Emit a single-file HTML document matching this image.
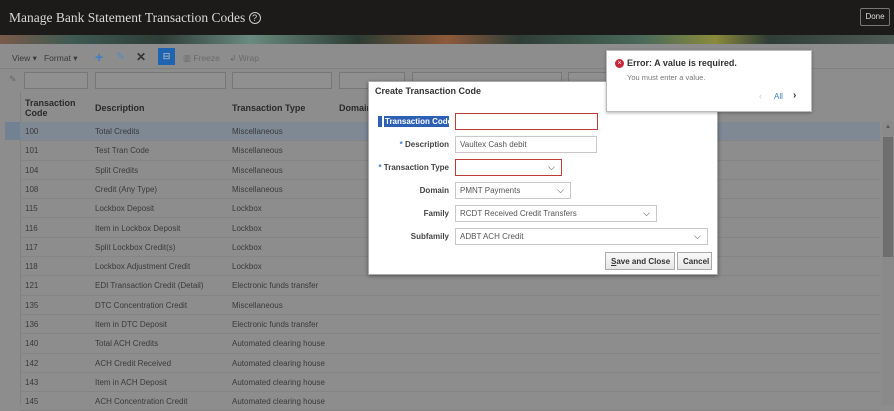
<!DOCTYPE html>
<html><head><style>
*{margin:0;padding:0;box-sizing:border-box}
body{width:894px;height:405px;overflow:hidden;background:#8d8d8d;font-family:"Liberation Sans",sans-serif;position:relative;color:#333;white-space:nowrap}
.a{position:absolute}
.hdr{left:0;top:0;width:894px;height:35px;background:#1d1b19}
.ttl{left:9px;top:10px;font-family:"Liberation Serif",serif;font-size:13.5px;color:#d8d8d8}
.ban{left:0;top:35px;width:894px;height:9px;background:linear-gradient(90deg,#7a5a4a,#3e5a52 8%,#2e3d38 18%,#6a8a80 28%,#2c3c34 40%,#8e5a3a 50%,#2e3d38 58%,#4a6a5a 72%,#8a8a3a 80%,#2e3d38 86%,#4e5a56)}
.tb{font-size:8.5px;color:#3a3a3a}
.f{background:#909090;border:1px solid #777;height:17px;top:72px}
.th{font-size:9px;font-weight:bold;color:#2a2a2a}
.r{left:20px;width:860px;height:19.3px;border-bottom:1px solid #848484;font-size:8px;color:#3a3a3a}
.r span{position:absolute;top:5px}
.dlg{left:368px;top:81px;width:350px;height:194px;background:#fff;border:1px solid #aaa;box-shadow:0 1px 4px rgba(0,0,0,.4)}
.lb{font-size:8px;font-weight:bold;color:#444;text-align:right;width:80px}
.in{border:1px solid #c8c8c8;height:17px;font-size:8px;color:#555;padding:3px 4px;background:#fff}
.in.err{border:1.5px solid #c03a3a}
.chev{position:absolute;right:6px;top:2px;font-size:9px;color:#333}
.btn{border:1px solid #aaa;background:linear-gradient(#fafafa,#e6e6e6);font-size:8px;font-weight:bold;height:18px;padding:4px 5px;color:#333}
</style></head><body>
<div class="a hdr"></div>
<div class="a ttl">Manage Bank Statement Transaction Codes <span style="font-family:'Liberation Sans';font-size:9px;border:1px solid #ccc;border-radius:50%;display:inline-block;width:12px;height:12px;text-align:center;line-height:11px;vertical-align:1px">?</span></div>
<div class="a" style="left:860px;top:8px;width:30px;height:18px;border:1px solid #777;border-radius:2px;color:#ddd;font-size:8px;text-align:center;line-height:16px">Done</div>
<div class="a ban"></div>
<div class="a tb" style="left:12px;top:53px">View ▾ &nbsp; Format ▾</div>
<div class="a" style="left:95px;top:49px;color:#3d7fc4;font-size:14px;font-weight:bold">+</div>
<div class="a" style="left:116px;top:50px;color:#5a88b8;font-size:11px">✎</div>
<div class="a" style="left:136px;top:50px;color:#333;font-size:12px;font-weight:bold">✕</div>
<div class="a" style="left:158px;top:48px;width:17px;height:17px;background:#1f64b0;color:#ccc;font-size:9px;text-align:center;line-height:17px">⊟</div>
<div class="a tb" style="left:183px;top:53px;color:#6a6a6a">▥ Freeze &nbsp;&nbsp; ↲ Wrap</div>
<div class="a" style="left:0;top:68px;width:894px;height:1px;background:#808080"></div>
<div class="a" style="left:9px;top:74px;font-size:9px;color:#666">✎</div>
<div class="a f" style="left:24px;width:64px"></div>
<div class="a f" style="left:95px;width:131px"></div>
<div class="a f" style="left:232px;width:100px"></div>
<div class="a f" style="left:339px;width:66px"></div>
<div class="a f" style="left:412px;width:150px"></div>
<div class="a f" style="left:568px;width:40px"></div>
<div class="a th" style="left:25px;top:98px;line-height:10px">Transaction<br>Code</div>
<div class="a th" style="left:95px;top:103px">Description</div>
<div class="a th" style="left:232px;top:103px">Transaction Type</div>
<div class="a th" style="left:339px;top:103px">Domain</div>
<div class="a" style="left:20px;top:92px;width:1px;height:313px;background:#808080"></div>
<div class="a" style="left:5px;top:122px;width:15px;height:18px;background:#738292"></div>
<div class="a" style="left:20px;top:122px;width:860px;height:19px;background:#7e8994"></div>
<div class="a" style="left:882px;top:122px;width:12px;height:283px;background:#8a8a8a"></div>
<div class="a" style="left:883px;top:137px;width:10px;height:120px;background:#6e6e6e"></div>
<div class="a" style="left:885px;top:124px;font-size:6px;color:#555">▲</div>

<div class="a" style="left:0;top:122px">
<div class="r a" style="top:0"><span style="left:5px">100</span><span style="left:75px">Total Credits</span><span style="left:212px">Miscellaneous</span></div>
<div class="r a" style="top:19.3px"><span style="left:5px">101</span><span style="left:75px">Test Tran Code</span><span style="left:212px">Miscellaneous</span></div>
<div class="r a" style="top:38.6px"><span style="left:5px">104</span><span style="left:75px">Split Credits</span><span style="left:212px">Miscellaneous</span></div>
<div class="r a" style="top:57.9px"><span style="left:5px">108</span><span style="left:75px">Credit (Any Type)</span><span style="left:212px">Miscellaneous</span></div>
<div class="r a" style="top:77.2px"><span style="left:5px">115</span><span style="left:75px">Lockbox Deposit</span><span style="left:212px">Lockbox</span></div>
<div class="r a" style="top:96.5px"><span style="left:5px">116</span><span style="left:75px">Item in Lockbox Deposit</span><span style="left:212px">Lockbox</span></div>
<div class="r a" style="top:115.8px"><span style="left:5px">117</span><span style="left:75px">Split Lockbox Credit(s)</span><span style="left:212px">Lockbox</span></div>
<div class="r a" style="top:135.1px"><span style="left:5px">118</span><span style="left:75px">Lockbox Adjustment Credit</span><span style="left:212px">Lockbox</span></div>
<div class="r a" style="top:154.4px"><span style="left:5px">121</span><span style="left:75px">EDI Transaction Credit (Detail)</span><span style="left:212px">Electronic funds transfer</span></div>
<div class="r a" style="top:173.7px"><span style="left:5px">135</span><span style="left:75px">DTC Concentration Credit</span><span style="left:212px">Miscellaneous</span></div>
<div class="r a" style="top:193px"><span style="left:5px">136</span><span style="left:75px">Item in DTC Deposit</span><span style="left:212px">Electronic funds transfer</span></div>
<div class="r a" style="top:212.3px"><span style="left:5px">140</span><span style="left:75px">Total ACH Credits</span><span style="left:212px">Automated clearing house</span></div>
<div class="r a" style="top:231.6px"><span style="left:5px">142</span><span style="left:75px">ACH Credit Received</span><span style="left:212px">Automated clearing house</span></div>
<div class="r a" style="top:250.9px"><span style="left:5px">143</span><span style="left:75px">Item in ACH Deposit</span><span style="left:212px">Automated clearing house</span></div>
<div class="r a" style="top:270.2px"><span style="left:5px">145</span><span style="left:75px">ACH Concentration Credit</span><span style="left:212px">Automated clearing house</span></div>
</div>

<div class="a dlg">
<div class="a" style="left:6px;top:4px;font-size:9px;font-weight:bold;color:#333">Create Transaction Code</div>
<div class="a" style="left:9px;top:34px;width:4px;height:11px;background:#2d5fb5"></div>
<div class="a" style="left:15px;top:34px;width:65px;height:11px;background:#2d5fb5;color:#fff;font-size:8px;font-weight:bold;line-height:11px;padding-left:1px;overflow:hidden">Transaction Code</div>
<div class="a in err" style="left:86px;top:31px;width:143px"></div>
<div class="a lb" style="left:0;top:58px"><span style="color:#3d7fc4">* </span>Description</div>
<div class="a in" style="left:86px;top:54px;width:142px">Vaultex Cash debit</div>
<div class="a lb" style="left:0;top:81px"><span style="color:#3d7fc4">* </span>Transaction Type</div>
<div class="a in err" style="left:86px;top:77px;width:107px"><span class="chev">⌵</span></div>
<div class="a lb" style="left:0;top:104px">Domain</div>
<div class="a in" style="left:86px;top:100px;width:116px">PMNT Payments<span class="chev">⌵</span></div>
<div class="a lb" style="left:0;top:127px">Family</div>
<div class="a in" style="left:86px;top:123px;width:202px">RCDT Received Credit Transfers<span class="chev">⌵</span></div>
<div class="a lb" style="left:0;top:150px">Subfamily</div>
<div class="a in" style="left:86px;top:146px;width:253px">ADBT ACH Credit<span class="chev">⌵</span></div>
<div class="a btn" style="left:236px;top:170px;width:70px"><u>S</u>ave and Close</div>
<div class="a btn" style="left:308px;top:170px;width:35px">Cancel</div>
</div>

<div class="a" style="left:606px;top:50px;width:206px;height:62px;background:#fff;border:1px solid #bbb;box-shadow:0 1px 3px rgba(0,0,0,.3)">
<div class="a" style="left:8px;top:8px;width:9px;height:9px;border-radius:50%;background:#c8283a;color:#fff;font-size:7px;text-align:center;line-height:9px">×</div>
<div class="a" style="left:20px;top:7px;font-size:9px;font-weight:bold;color:#333">Error: A value is required.</div>
<div class="a" style="left:20px;top:22px;font-size:7.5px;color:#777">You must enter a value.</div>
<div class="a" style="left:152px;top:40px;font-size:9px;color:#ccc">‹</div>
<div class="a" style="left:167px;top:41px;font-size:8px;color:#3d7fc4">All</div>
<div class="a" style="left:186px;top:39px;font-size:10px;font-weight:bold;color:#333">›</div>
</div>
</body></html>
